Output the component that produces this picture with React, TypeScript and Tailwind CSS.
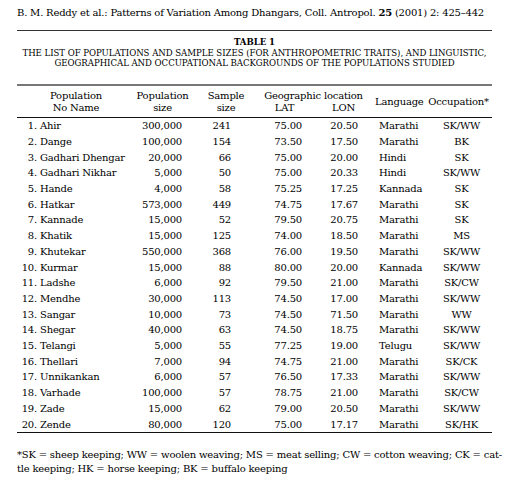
const rows: string[][] = [
  ["1.", "Ahir", "300,000", "241", "75.00", "20.50", "Marathi", "SK/WW"],
  ["2.", "Dange", "100,000", "154", "73.50", "17.50", "Marathi", "BK"],
  ["3.", "Gadhari Dhengar", "20,000", "66", "75.00", "20.00", "Hindi", "SK"],
  ["4.", "Gadhari Nikhar", "5,000", "50", "75.00", "20.33", "Hindi", "SK/WW"],
  ["5.", "Hande", "4,000", "58", "75.25", "17.25", "Kannada", "SK"],
  ["6.", "Hatkar", "573,000", "449", "74.75", "17.67", "Marathi", "SK"],
  ["7.", "Kannade", "15,000", "52", "79.50", "20.75", "Marathi", "SK"],
  ["8.", "Khatik", "15,000", "125", "74.00", "18.50", "Marathi", "MS"],
  ["9.", "Khutekar", "550,000", "368", "76.00", "19.50", "Marathi", "SK/WW"],
  ["10.", "Kurmar", "15,000", "88", "80.00", "20.00", "Kannada", "SK/WW"],
  ["11.", "Ladshe", "6,000", "92", "79.50", "21.00", "Marathi", "SK/CW"],
  ["12.", "Mendhe", "30,000", "113", "74.50", "17.00", "Marathi", "SK/WW"],
  ["13.", "Sangar", "10,000", "73", "74.50", "71.50", "Marathi", "WW"],
  ["14.", "Shegar", "40,000", "63", "74.50", "18.75", "Marathi", "SK/WW"],
  ["15.", "Telangi", "5,000", "55", "77.25", "19.00", "Telugu", "SK/WW"],
  ["16.", "Thellari", "7,000", "94", "74.75", "21.00", "Marathi", "SK/CK"],
  ["17.", "Unnikankan", "6,000", "57", "76.50", "17.33", "Marathi", "SK/WW"],
  ["18.", "Varhade", "100,000", "57", "78.75", "21.00", "Marathi", "SK/CW"],
  ["19.", "Zade", "15,000", "62", "79.00", "20.50", "Marathi", "SK/WW"],
  ["20.", "Zende", "80,000", "120", "75.00", "17.17", "Marathi", "SK/HK"],
];

const cols = "grid grid-cols-[20px_98px_65px_52px_65px_53px_53px_69px]";

export default function App() {
  return (
    <div className="w-[520px] h-[501px] bg-white text-black font-['DejaVu_Serif',serif] text-[10px] tracking-[-0.2px] overflow-hidden">
      <div className="mx-[17px] w-[475px]">
        {/* cabecera de la página */}
        <div className="pt-[5px] pb-[9px] leading-[16px] border-b border-[#333] whitespace-nowrap">
          B. M. Reddy et al.: Patterns of Variation Among Dhangars, Coll. Antropol. <b>25</b> (2001) 2: 425–442
        </div>

        {/* título de la tabla */}
        <div className="mt-[5px] text-center text-[8.6px] leading-[10px] tracking-[-0.05px] whitespace-nowrap">
          <div className="font-bold leading-[12px]">TABLE 1</div>
          <div>THE LIST OF POPULATIONS AND SAMPLE SIZES (FOR ANTHROPOMETRIC TRAITS), AND LINGUISTIC,</div>
          <div>GEOGRAPHICAL AND OCCUPATIONAL BACKGROUNDS OF THE POPULATIONS STUDIED</div>
        </div>

        {/* tabla */}
        <div className="mt-[15.5px] border-t-2 border-[#777]">
          <div className={`${cols} items-center pt-[4.7px] pb-[3px] leading-[11.7px] border-b border-[#111] whitespace-nowrap`}>
            <div className="col-span-2 text-center">
              Population
              <br />
              No Name
            </div>
            <div className="text-center pr-[10px]">
              Population
              <br />
              size
            </div>
            <div className="text-center">
              Sample
              <br />
              size
            </div>
            <div className="col-span-2 pl-[5px]">
              <div className="text-center">Geographic location</div>
              <div className="flex">
                <span className="w-[60px] text-center pr-[5px]">LAT</span>
                <span className="w-[53px] text-center">LON</span>
              </div>
            </div>
            <div className="pl-[5px]">Language</div>
            <div className="text-center pl-[2px]">Occupation*</div>
          </div>

          <div className="pt-[0.6px] border-b-[1.5px] border-[#111]">
            {rows.map((r) => (
              <div key={r[0]} className={`${cols} leading-[15.7px] whitespace-nowrap`}>
                <div className="text-right">{r[0]}</div>
                <div className="pl-[3px]">{r[1]}</div>
                <div className="text-right pr-[18px]">{r[2]}</div>
                <div className="text-right pr-[21px]">{r[3]}</div>
                <div className="text-right pr-[15px]">{r[4]}</div>
                <div className="text-right pr-[12px]">{r[5]}</div>
                <div className="pl-[9px]">{r[6]}</div>
                <div className="text-center pl-[8px]">{r[7]}</div>
              </div>
            ))}
          </div>
        </div>

        {/* nota al pie */}
        <div className="mt-[15px] leading-[13.5px]">
          <div className="text-justify [text-align-last:justify] whitespace-nowrap">
            *SK = sheep keeping; WW = woolen weaving; MS = meat selling; CW = cotton weaving; CK = cat-
          </div>
          <div>tle keeping; HK = horse keeping; BK = buffalo keeping</div>
        </div>
      </div>
    </div>
  );
}
